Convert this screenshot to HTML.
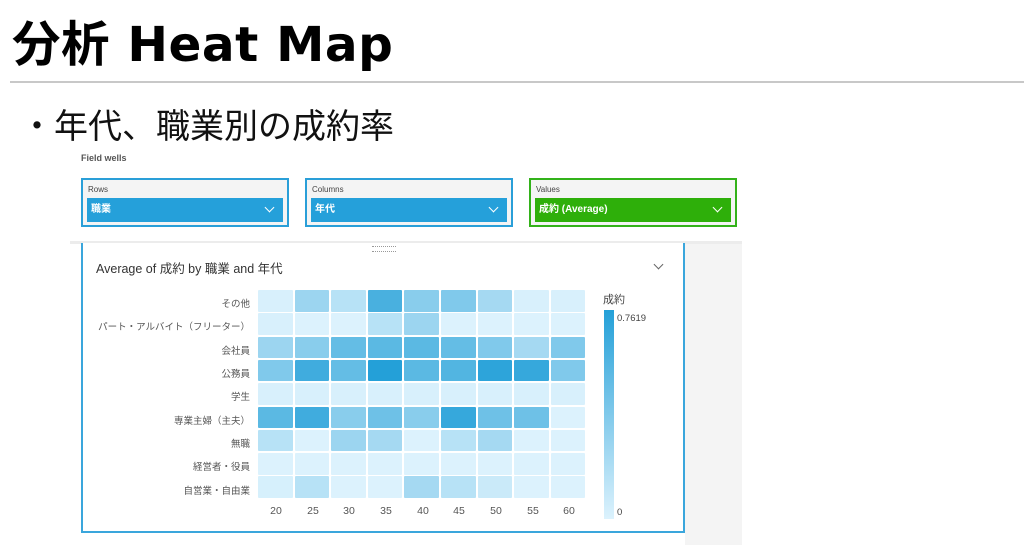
<!DOCTYPE html>
<html><head><meta charset="utf-8"><style>
body{margin:0;width:1024px;height:545px;background:#fff;position:relative;overflow:hidden;font-family:"Liberation Sans","Noto Sans CJK JP",sans-serif}
.a{position:absolute}
.title{left:12px;top:5px;font-size:48.5px;font-weight:bold;color:#000;white-space:nowrap;font-family:"DejaVu Sans","Noto Sans CJK JP",sans-serif;letter-spacing:0.5px}
.well{position:absolute;top:178px;width:208px;height:49px;border:2px solid #2a9fd8;background:#f4f4f4;box-sizing:border-box}
.well .l{position:absolute;left:5px;top:5px;font-size:8px;color:#444}
.well .b{position:absolute;left:4px;right:4px;top:18px;height:24px;background:#25a0da;color:#fff;font-size:10px;font-weight:bold;line-height:24px;padding-left:4px}
.chev{position:absolute;right:10px;top:6px;width:6px;height:6px;border-right:1px solid #fff;border-bottom:1px solid #fff;transform:rotate(45deg)}
.rl{position:absolute;right:774px;font-size:9.5px;color:#555;white-space:nowrap;text-align:right}
.cl{position:absolute;top:505px;font-size:10.5px;color:#555;width:36px;text-align:center}
.cell{position:absolute;width:34.5px;height:21.5px;border-radius:1px}
</style></head><body>
<div class="a title">分析 Heat Map</div>
<div class="a" style="left:10px;top:81px;width:1014px;height:2px;background:#c8c8c8"></div>
<div class="a" style="left:20px;top:99px;font-size:34px;color:#111;white-space:nowrap">・年代、職業別の成約率</div>
<div class="a" style="left:81px;top:153px;font-size:9px;font-weight:bold;color:#555">Field wells</div>
<div class="well" style="left:81px"><div class="l">Rows</div><div class="b">職業<span class="chev"></span></div></div>
<div class="well" style="left:305px"><div class="l">Columns</div><div class="b">年代<span class="chev"></span></div></div>
<div class="well" style="left:529px;border-color:#33b21a"><div class="l">Values</div><div class="b" style="background:#2eaf0a">成約 (Average)<span class="chev"></span></div></div>
<div class="a" style="left:70px;top:241px;width:672px;height:3px;background:#ececec"></div>
<div class="a" style="left:685px;top:244px;width:57px;height:301px;background:#f4f4f4"></div>
<div class="a" style="left:81px;top:243px;width:600px;height:288px;border:2px solid #3aa6dc;border-top:none;background:#fff"></div>
<div class="a" style="left:372px;top:246px;width:24px;height:4px;border-top:1px dotted #999;border-bottom:1px dotted #999"></div>
<div class="a" style="left:96px;top:258px;font-size:12.5px;color:#333">Average of 成約 by 職業 and 年代</div>
<div class="a" style="left:655px;top:261px;width:6px;height:6px;border-right:1.2px solid #666;border-bottom:1.2px solid #666;transform:rotate(45deg)"></div>
<div class="rl" style="top:296px">その他</div>
<div class="rl" style="top:319px">パート・アルバイト（フリーター）</div>
<div class="rl" style="top:343px">会社員</div>
<div class="rl" style="top:366px">公務員</div>
<div class="rl" style="top:389px">学生</div>
<div class="rl" style="top:413px">専業主婦（主夫）</div>
<div class="rl" style="top:436px">無職</div>
<div class="rl" style="top:459px">経営者・役員</div>
<div class="rl" style="top:483px">自営業・自由業</div>
<div id="g"></div>
<div class="cl" style="left:258px">20</div><div class="cl" style="left:295px">25</div><div class="cl" style="left:331px">30</div><div class="cl" style="left:368px">35</div><div class="cl" style="left:405px">40</div><div class="cl" style="left:441px">45</div><div class="cl" style="left:478px">50</div><div class="cl" style="left:515px">55</div><div class="cl" style="left:551px">60</div>
<div class="a" style="left:603px;top:291px;font-size:11px;color:#444">成約</div>
<div class="a" style="left:604px;top:310px;width:10px;height:209px;background:linear-gradient(#24a0d8,#dcf2fd)"></div>
<div class="a" style="left:617px;top:313px;font-size:9.5px;color:#444">0.7619</div>
<div class="a" style="left:617px;top:507px;font-size:9.5px;color:#444">0</div>
<script>
var d=[[.02,.35,.2,.8,.45,.5,.3,.02,.02],[.02,0,0,.2,.35,0,0,0,0],[.35,.45,.65,.7,.7,.65,.5,.3,.5],[.5,.85,.65,1,.7,.75,.95,.9,.5],[.02,.02,.02,.02,.02,.02,.02,.02,.02],[.7,.85,.45,.6,.45,.9,.6,.6,0],[.2,0,.35,.3,0,.2,.3,0,0],[0,0,0,0,0,0,0,0,0],[.03,.2,0,0,.3,.2,.1,0,0]];
var h='';for(var r=0;r<9;r++)for(var c=0;c<9;c++){var t=d[r][c];var R=Math.round(220-184*t),G=Math.round(242-82*t),B=Math.round(253-37*t);
h+='<div class="cell" style="left:'+(258+c*36.6).toFixed(1)+'px;top:'+(290+r*23.3).toFixed(1)+'px;background:rgb('+R+','+G+','+B+')"></div>';}
document.getElementById('g').innerHTML=h;
</script>
</body></html>
